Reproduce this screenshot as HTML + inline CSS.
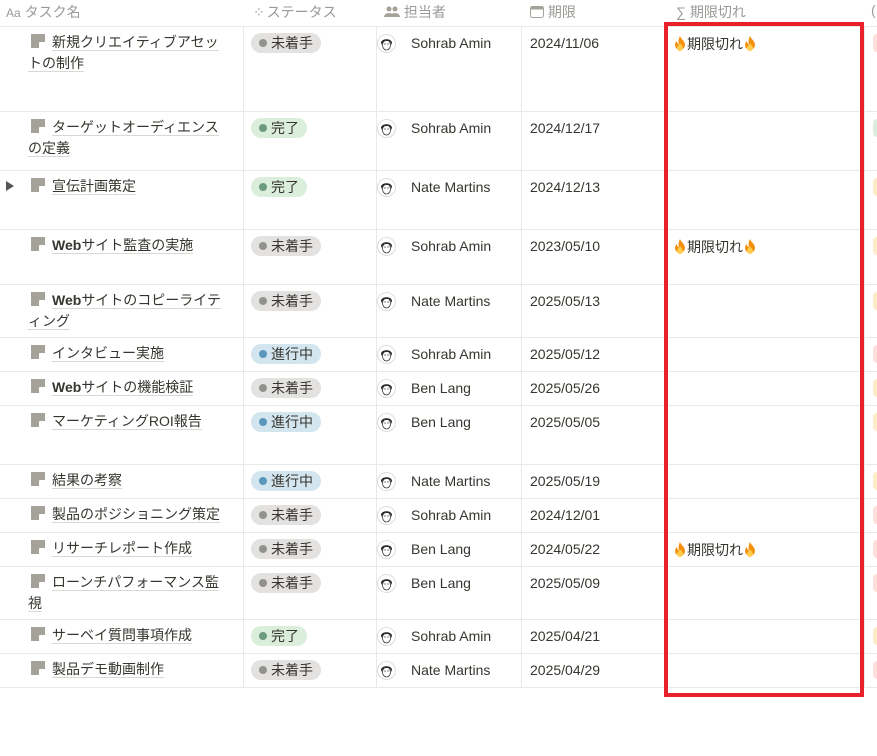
<!DOCTYPE html>
<html><head><meta charset="utf-8"><style>
*{margin:0;padding:0;box-sizing:border-box}
body{width:877px;height:756px;background:#fff;font-family:"Liberation Sans","Noto Sans CJK JP",sans-serif;font-size:14px;color:#37352f;position:relative;overflow:hidden}
.a{position:absolute}
.hd{color:#9b9a97;font-size:14px;top:2px}
.hl{left:0;width:877px;height:1px;background:#e9e9e7}
.vl{top:26px;width:1px;background:#e9e9e7;height:661px}
.nm{left:28px;width:200px;line-height:21px;text-indent:24px}
.nm span{border-bottom:1px solid #d9d8d5}
.ic{width:14px;height:14px;background:#a5a29a;left:31px}
.ic:after{content:"";position:absolute;right:0;bottom:0;width:6px;height:6px;background:#fff;border-top-left-radius:1px}
.pill{left:251px;height:20px;border-radius:10px;padding:0 8px 0 20px;line-height:20px;font-size:14px}
.pill:before{content:"";position:absolute;left:8px;top:6px;width:8px;height:8px;border-radius:4px;background:var(--d)}
.g{background:#e3e2e0;--d:#91918e}.gr{background:#dbeddb;--d:#6c9b7d}.bl{background:#d3e5ef;--d:#5b97bd}
.av{left:377px;width:19px;height:19px;border-radius:50%;background:#fff;border:1px solid #ddd}
.pn{left:411px}
.dt{left:530px}
.od{left:673px}
.tab{left:873px;width:8px;height:18px;border-radius:4px}
b{font-weight:bold}
</style></head><body>
<div class="a hd" style="left:6px"><span style="font-size:12px">Aa</span> タスク名</div>
<div class="a hd" style="left:253px"><span style="letter-spacing:-2px">⁘</span> ステータス</div>
<div class="a hd" style="left:384px"><svg width="16" height="12" style="vertical-align:-1px"><circle cx="5" cy="3" r="2.5" fill="#a5a29a"/><circle cx="11" cy="3" r="2.5" fill="#a5a29a"/><path d="M0 11a5 4 0 0 1 10 0zM6 11a5 4 0 0 1 10 0z" fill="#a5a29a"/></svg> 担当者</div>
<div class="a hd" style="left:530px"><svg width="14" height="13" style="vertical-align:-1px"><rect x="0.5" y="1.5" width="13" height="11" rx="2" fill="none" stroke="#a5a29a"/><rect x="0.5" y="1.5" width="13" height="3" fill="#a5a29a"/></svg> 期限</div>
<div class="a hd" style="left:676px">∑ 期限切れ</div>
<div class="a hd" style="left:871px">(</div>
<div class="a hl" style="top:26px"></div>
<div class="a vl" style="left:243px"></div>
<div class="a vl" style="left:376px"></div>
<div class="a vl" style="left:521px"></div>
<div class="a vl" style="left:864px"></div>
<div id="rows"></div>
<div class="a" style="left:664px;top:22px;width:200px;height:675px;border:4px solid #e8212b"></div>
<script>
const R=[
[26,85,'新規クリエイティブアセットの制作','g','未着手','S','Sohrab Amin','2024/11/06',1,'#fde0dc'],
[111,59,'ターゲットオーディエンスの定義','gr','完了','S','Sohrab Amin','2024/12/17',0,'#dbeddb'],
[170,59,'宣伝計画策定','gr','完了','N','Nate Martins','2024/12/13',0,'#fdecc8'],
[229,55,'<b>Web</b>サイト監査の実施','g','未着手','S','Sohrab Amin','2023/05/10',1,'#fdecc8'],
[284,53,'<b>Web</b>サイトのコピーライティング','g','未着手','N','Nate Martins','2025/05/13',0,'#fdecc8'],
[337,34,'インタビュー実施','bl','進行中','S','Sohrab Amin','2025/05/12',0,'#fde0dc'],
[371,34,'<b>Web</b>サイトの機能検証','g','未着手','B','Ben Lang','2025/05/26',0,'#fdecc8'],
[405,59,'マーケティングROI報告','bl','進行中','B','Ben Lang','2025/05/05',0,'#fdecc8'],
[464,34,'結果の考察','bl','進行中','N','Nate Martins','2025/05/19',0,'#fdecc8'],
[498,34,'製品のポジショニング策定','g','未着手','S','Sohrab Amin','2024/12/01',0,'#fde0dc'],
[532,34,'リサーチレポート作成','g','未着手','B','Ben Lang','2024/05/22',1,'#fde0dc'],
[566,53,'ローンチパフォーマンス監視','g','未着手','B','Ben Lang','2025/05/09',0,'#fde0dc'],
[619,34,'サーベイ質問事項作成','gr','完了','S','Sohrab Amin','2025/04/21',0,'#fdecc8'],
[653,34,'製品デモ動画制作','g','未着手','N','Nate Martins','2025/04/29',0,'#fde0dc']];
const fire='<svg width="14" height="15" viewBox="0 0 14 15" style="vertical-align:-2px"><path d="M7 0C8 3 12 5 12 9a5 5 0 0 1-10 0c0-2 1-3 2-4 0 2 1 3 2 3C5 5 6 2 7 0z" fill="#f4900c"/><path d="M7 7c1 2 3 3 3 5a3 3 0 0 1-6 0c0-2 2-3 3-5z" fill="#ffcc4d"/></svg>';
let h='';
for(const r of R){const t=r[0];
h+=`<div class="a hl" style="top:${t+r[1]}px"></div>`;
h+=`<div class="a ic" style="top:${t+8}px"></div>`;
h+=`<div class="a nm" style="top:${t+6}px"><span>${r[2]}</span></div>`;
h+=`<div class="a pill ${r[3]}" style="top:${t+7}px">${r[4]}</div>`;
h+=`<div class="a av" style="top:${t+8}px"><svg width="17" height="17" viewBox="0 0 17 17"><path d="M3 8c0-5 11-5 11 0l-1 2c0-3-1-4-4-4S4 7 4 10z" fill="#222"/><ellipse cx="8.5" cy="10" rx="4" ry="5" fill="none" stroke="#333" stroke-width=".8"/><circle cx="7" cy="9" r=".6" fill="#222"/><circle cx="10" cy="9" r=".6" fill="#222"/></svg></div>`;
h+=`<div class="a pn" style="top:${t+9}px">${r[6]}</div>`;
h+=`<div class="a dt" style="top:${t+9}px">${r[7]}</div>`;
if(r[8])h+=`<div class="a od" style="top:${t+8}px">${fire}期限切れ${fire}</div>`;
h+=`<div class="a tab" style="top:${t+8}px;background:${r[9]}"></div>`;
}
h+='<div class="a" style="left:6px;top:181px;width:0;height:0;border-left:8px solid #555;border-top:5px solid transparent;border-bottom:5px solid transparent"></div>';
document.getElementById('rows').innerHTML=h;
</script>
</body></html>
